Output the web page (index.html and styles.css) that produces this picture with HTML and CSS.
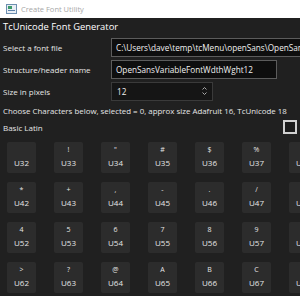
FILE: index.html
```html
<!DOCTYPE html>
<html lang="en">
<head>
    <meta charset="UTF-8">
    <title>Create Font Utility</title>
    <link rel="stylesheet" href="styles.css">
</head>
<body>
    <!-- Title bar -->
    <div class="titlebar">
        <svg class="app-icon" width="11" height="10" viewBox="0 0 11 10">
            <rect x="0.5" y="0.5" width="10" height="9" fill="#e8eef4" stroke="#6d8fb0"/>
            <rect x="2" y="2" width="4" height="3" fill="#3a9a6a"/>
            <rect x="2" y="6" width="7" height="1" fill="#5a7fa8"/>
        </svg>
        <span class="title-text">Create Font Utility</span>
    </div>

    <div class="window">
        <div class="heading">TcUnicode Font Generator</div>

        <div class="form-row">
            <label class="field-label">Select a font file</label>
            <div class="text-input wide">C:\Users\dave\temp\tcMenu\openSans\OpenSans-VariableFont_wdth,wght.ttf</div>
        </div>
        <div class="form-row">
            <label class="field-label">Structure/header name</label>
            <div class="text-input">OpenSansVariableFontWdthWght12</div>
        </div>
        <div class="form-row">
            <label class="field-label">Size in pixels</label>
            <div class="text-input spinner">
                <span>12</span>
                <span class="spin-arrows">
                    <svg width="7" height="12" viewBox="0 0 7 12">
                        <path d="M1.5 4.5 L3.5 2.5 L5.5 4.5" fill="none" stroke="#aaa" stroke-width="1"/>
                        <path d="M1.5 7.5 L3.5 9.5 L5.5 7.5" fill="none" stroke="#aaa" stroke-width="1"/>
                    </svg>
                </span>
            </div>
        </div>

        <div class="info">Choose Characters below, selected = 0, approx size Adafruit 16, TcUnicode 18</div>

        <div class="block-row">
            <span>Basic Latin</span>
            <span class="checkbox"></span>
        </div>

        <div class="char-grid" id="grid"></div>
    </div>

    <script>
        // Construir a grade de caracteres
        const grid = document.getElementById('grid');
        const chars = [
            [' ', 'U32'], ['!', 'U33'], ['"', 'U34'], ['#', 'U35'], ['$', 'U36'], ['%', 'U37'], ['&', 'U38'],
            ['*', 'U42'], ['+', 'U43'], [',', 'U44'], ['-', 'U45'], ['.', 'U46'], ['/', 'U47'], ['0', 'U48'],
            ['4', 'U52'], ['5', 'U53'], ['6', 'U54'], ['7', 'U55'], ['8', 'U56'], ['9', 'U57'], [':', 'U58'],
            ['>', 'U62'], ['?', 'U63'], ['@', 'U64'], ['A', 'U65'], ['B', 'U66'], ['C', 'U67'], ['D', 'U68']
        ];
        chars.forEach(function(c) {
            const btn = document.createElement('div');
            btn.className = 'char-btn';
            btn.innerHTML = '<span class="glyph"></span><span class="code"></span>';
            btn.querySelector('.glyph').textContent = c[0];
            btn.querySelector('.code').textContent = c[1];
            grid.appendChild(btn);
        });
    </script>
</body>
</html>
```

FILE: styles.css
```css
body {
    margin: 0;
    padding: 0;
    width: 300px;
    height: 296px;
    overflow: hidden;
    font-family: "Open Sans", "Noto Sans", sans-serif;
    background-color: #202020;
    color: #e6e6e6;
}

.titlebar {
    height: 18px;
    background-color: #ffffff;
    display: flex;
    align-items: center;
    padding-left: 6px;
}

.app-icon {
    margin-right: 4px;
}

.title-text {
    font-size: 7.5px;
    color: #a8a8a8;
}

.window {
    padding: 0 0 0 3px;
}

.heading {
    font-size: 9.4px;
    height: 18px;
    line-height: 18px;
    color: #ffffff;
}

.form-row {
    display: flex;
    align-items: center;
    height: 22px;
}

.field-label {
    width: 108px;
    font-size: 8px;
    flex-shrink: 0;
}

.text-input {
    box-sizing: border-box;
    height: 19px;
    width: 166px;
    padding: 0 4px;
    background-color: #0e0e0e;
    border: 1px solid #5c5c5c;
    font-size: 8.2px;
    line-height: 17px;
    white-space: nowrap;
    overflow: hidden;
    color: #f0f0f0;
}

.text-input.wide {
    width: 200px;
    flex-shrink: 0;
}

.text-input.spinner {
    width: 102px;
    display: flex;
    justify-content: space-between;
    align-items: center;
    padding: 0 4px 0 5px;
    background-color: #151515;
    border-color: #3a3a3a;
}

.spin-arrows {
    display: flex;
    align-items: center;
}

.info {
    font-size: 7.9px;
    height: 18px;
    line-height: 18px;
    white-space: nowrap;
}

.block-row {
    display: flex;
    align-items: center;
    justify-content: space-between;
    height: 14px;
    font-size: 8px;
    padding-right: 3px;
}

.checkbox {
    box-sizing: border-box;
    width: 14px;
    height: 14px;
    border: 2px solid #d0d0d0;
    background-color: #1a1a1a;
}

.char-grid {
    display: grid;
    grid-template-columns: repeat(7, 29px);
    column-gap: 18px;
    row-gap: 9px;
    padding: 8px 0 0 4px;
}

.char-btn {
    height: 31px;
    background-color: #2c2c2c;
    border-radius: 2px;
    display: flex;
    flex-direction: column;
    align-items: center;
    font-size: 8px;
}

.glyph {
    height: 12px;
    line-height: 12px;
    margin-top: 2px;
    font-size: 7px;
}

.code {
    line-height: 13px;
}
```
